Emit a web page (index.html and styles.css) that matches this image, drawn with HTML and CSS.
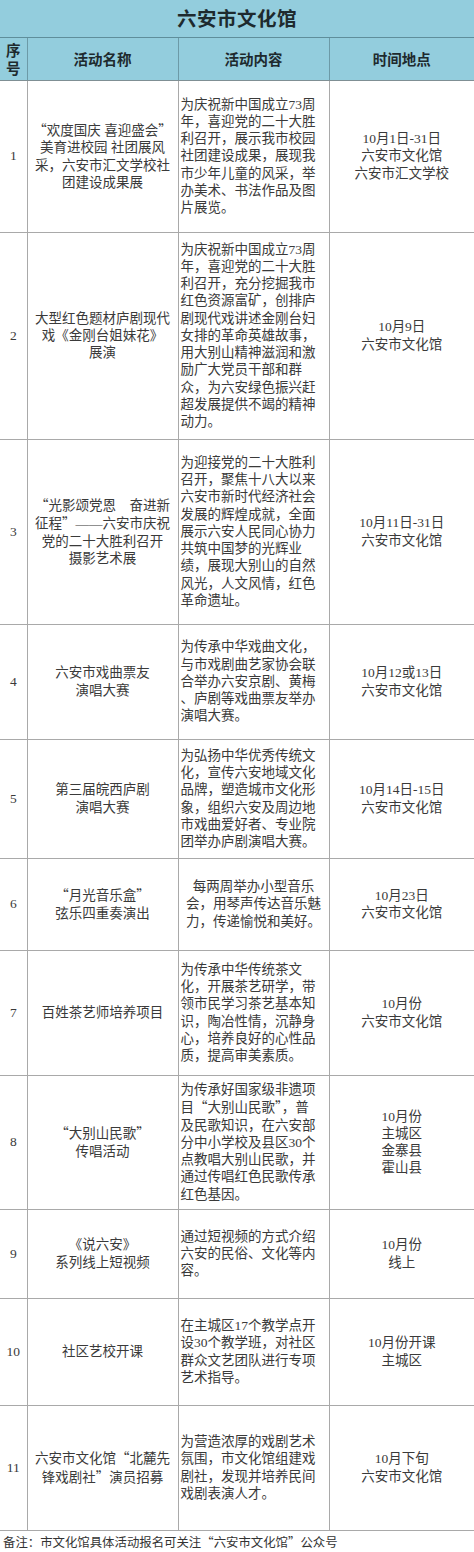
FILE: index.html
```html
<!DOCTYPE html>
<html lang="zh-CN">
<head>
<meta charset="utf-8">
<title>六安市文化馆</title>
<link rel="stylesheet" href="styles.css">
</head>
<body>
<table class="sched">
  <colgroup>
    <col class="c-no"><col class="c-name"><col class="c-desc"><col class="c-time">
  </colgroup>
  <thead>
    <tr class="r-title"><th colspan="4" class="title">六安市文化馆</th></tr>
    <tr class="r-head">
      <th class="h-no">序<br>号</th>
      <th>活动名称</th>
      <th>活动内容</th>
      <th>时间地点</th>
    </tr>
  </thead>
  <tbody>
    <tr class="r1">
      <td class="no">1</td>
      <td class="name"><span class="q">“</span>欢度国庆 喜迎盛会<span class="q">”</span><br>美育进校园 社团展风<br>采，六安市汇文学校社<br>团建设成果展</td>
      <td class="desc">为庆祝新中国成立73周<br>年，喜迎党的二十大胜<br>利召开，展示我市校园<br>社团建设成果，展现我<br>市少年儿童的风采，举<br>办美术、书法作品及图<br>片展览。</td>
      <td class="time">10月1日-31日<br>六安市文化馆<br>六安市汇文学校</td>
    </tr>
    <tr class="r2">
      <td class="no">2</td>
      <td class="name">大型红色题材庐剧现代<br>戏《金刚台姐妹花》<br>展演</td>
      <td class="desc">为庆祝新中国成立73周<br>年，喜迎党的二十大胜<br>利召开，充分挖掘我市<br>红色资源富矿，创排庐<br>剧现代戏讲述金刚台妇<br>女排的革命英雄故事，<br>用大别山精神滋润和激<br>励广大党员干部和群<br>众，为六安绿色振兴赶<br>超发展提供不竭的精神<br>动力。</td>
      <td class="time">10月9日<br>六安市文化馆</td>
    </tr>
    <tr class="r3">
      <td class="no">3</td>
      <td class="name"><span class="q">“</span>光影颂党恩　奋进新<br>征程<span class="q">”</span>——六安市庆祝<br>党的二十大胜利召开<br>摄影艺术展</td>
      <td class="desc">为迎接党的二十大胜利<br>召开，聚焦十八大以来<br>六安市新时代经济社会<br>发展的辉煌成就，全面<br>展示六安人民同心协力<br>共筑中国梦的光辉业<br>绩，展现大别山的自然<br>风光，人文风情，红色<br>革命遗址。</td>
      <td class="time">10月11日-31日<br>六安市文化馆</td>
    </tr>
    <tr class="r4">
      <td class="no">4</td>
      <td class="name">六安市戏曲票友<br>演唱大赛</td>
      <td class="desc">为传承中华戏曲文化，<br>与市戏剧曲艺家协会联<br>合举办六安京剧、黄梅<br>、庐剧等戏曲票友举办<br>演唱大赛。</td>
      <td class="time">10月12或13日<br>六安市文化馆</td>
    </tr>
    <tr class="r5">
      <td class="no">5</td>
      <td class="name">第三届皖西庐剧<br>演唱大赛</td>
      <td class="desc">为弘扬中华优秀传统文<br>化，宣传六安地域文化<br>品牌，塑造城市文化形<br>象，组织六安及周边地<br>市戏曲爱好者、专业院<br>团举办庐剧演唱大赛。</td>
      <td class="time">10月14日-15日<br>六安市文化馆</td>
    </tr>
    <tr class="r6">
      <td class="no">6</td>
      <td class="name"><span class="q">“</span>月光音乐盒<span class="q">”</span><br>弦乐四重奏演出</td>
      <td class="desc center">每两周举办小型音乐<br>会，用琴声传达音乐魅<br>力，传递愉悦和美好。</td>
      <td class="time">10月23日<br>六安市文化馆</td>
    </tr>
    <tr class="r7">
      <td class="no">7</td>
      <td class="name">百姓茶艺师培养项目</td>
      <td class="desc">为传承中华传统茶文<br>化，开展茶艺研学，带<br>领市民学习茶艺基本知<br>识，陶冶性情，沉静身<br>心，培养良好的心性品<br>质，提高审美素质。</td>
      <td class="time">10月份<br>六安市文化馆</td>
    </tr>
    <tr class="r8">
      <td class="no">8</td>
      <td class="name"><span class="q">“</span>大别山民歌<span class="q">”</span><br>传唱活动</td>
      <td class="desc">为传承好国家级非遗项<br>目<span class="q">“</span>大别山民歌<span class="q">”</span>，普<br>及民歌知识，在六安部<br>分中小学校及县区30个<br>点教唱大别山民歌，并<br>通过传唱红色民歌传承<br>红色基因。</td>
      <td class="time">10月份<br>主城区<br>金寨县<br>霍山县</td>
    </tr>
    <tr class="r9">
      <td class="no">9</td>
      <td class="name">《说六安》<br>系列线上短视频</td>
      <td class="desc">通过短视频的方式介绍<br>六安的民俗、文化等内<br>容。</td>
      <td class="time">10月份<br>线上</td>
    </tr>
    <tr class="r10">
      <td class="no">10</td>
      <td class="name">社区艺校开课</td>
      <td class="desc">在主城区17个教学点开<br>设30个教学班，对社区<br>群众文艺团队进行专项<br>艺术指导。</td>
      <td class="time">10月份开课<br>主城区</td>
    </tr>
    <tr class="r11">
      <td class="no">11</td>
      <td class="name">六安市文化馆<span class="q">“</span>北麓先<br>锋戏剧社<span class="q">”</span>演员招募</td>
      <td class="desc">为营造浓厚的戏剧艺术<br>氛围，市文化馆组建戏<br>剧社，发现并培养民间<br>戏剧表演人才。</td>
      <td class="time">10月下旬<br>六安市文化馆</td>
    </tr>
  </tbody>
</table>
<p class="note">备注：市文化馆具体活动报名可关注<span class="q">“</span>六安市文化馆<span class="q">”</span>公众号</p>
</body>
</html>
```
FILE: styles.css
```css
html, body {
  margin: 0;
  padding: 0;
  background: #ffffff;
}
body {
  width: 474px;
  font-family: "Liberation Serif", "Noto Sans CJK SC", serif;
  color: #3a3a3a;
}
.q {
  font-family: "Noto Sans CJK SC", sans-serif;
}
.sched {
  width: 474px;
  table-layout: fixed;
  border-collapse: collapse;
  border-spacing: 0;
}
.c-no { width: 27px; }
.c-name { width: 151px; }
.c-desc { width: 151px; }
.c-time { width: 145px; }

.sched th {
  background: #93cddd;
  color: #1e2a2e;
  font-weight: 700;
  padding: 0;
  font-family: "Noto Sans CJK SC", sans-serif;
}
.r-title { height: 37px; }
.title {
  font-size: 19.5px;
  line-height: 24px;
  border-bottom: 1px solid #5f8e9b;
  letter-spacing: 0.5px;
}
.r-head { height: 43px; }
.r-head th {
  font-size: 14.5px;
  line-height: 18px;
  border-left: 1px solid #6c9aa7;
  border-bottom: 1px solid #7f8f94;
}
.r-head th:first-child { border-left: none; }

.sched td {
  font-size: 13.5px;
  line-height: 17.2px;
  padding: 0 2px;
  vertical-align: middle;
  border-left: 1px solid #a9a9a9;
  border-bottom: 1px solid #a9a9a9;
  white-space: nowrap;
}
.sched td:first-child { border-left: none; }
.no { text-align: center; padding: 0; font-size: 14px; }
.name { text-align: center; }
.desc { text-align: left; }
.desc.center { text-align: center; }
.time { text-align: center; }

.r1 { height: 152px; }
.r2 { height: 207px; }
.r3 { height: 185px; }
.r4 { height: 115px; }
.r5 { height: 119px; }
.r6 { height: 92px; }
.r7 { height: 125px; }
.r8 { height: 134px; }
.r9 { height: 89px; }
.r10 { height: 107px; }
.r11 { height: 125px; }

.note {
  margin: 0;
  padding: 0 0 0 3px;
  height: 22px;
  font-size: 12.4px;
  line-height: 22px;
  color: #333333;
  white-space: nowrap;
}
```
